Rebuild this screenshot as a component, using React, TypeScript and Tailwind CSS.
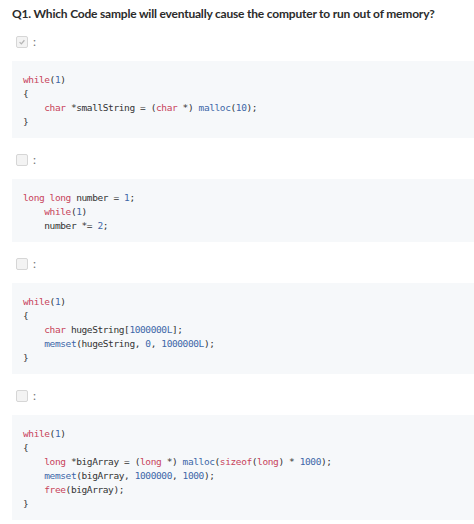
import React from "react";

type Tok = [string, string?];

const K = "text-[#c8435b]"; // keyword
const N = "text-[#3d67a8]"; // number / function

const samples: { checked: boolean; lines: Tok[][] }[] = [
  {
    checked: true,
    lines: [
      [["while", K], ["("], ["1", N], [")"]],
      [["{"]],
      [["    "], ["char", K], [" *smallString = ("], ["char", K], [" *) "], ["malloc", N], ["("], ["10", N], [");"]],
      [["}"]],
    ],
  },
  {
    checked: false,
    lines: [
      [["long", K], [" "], ["long", K], [" number = "], ["1", N], [";"]],
      [["    "], ["while", K], ["("], ["1", N], [")"]],
      [["    number *= "], ["2", N], [";"]],
    ],
  },
  {
    checked: false,
    lines: [
      [["while", K], ["("], ["1", N], [")"]],
      [["{"]],
      [["    "], ["char", K], [" hugeString["], ["1000000L", N], ["];"]],
      [["    "], ["memset", N], ["(hugeString, "], ["0", N], [", "], ["1000000L", N], [");"]],
      [["}"]],
    ],
  },
  {
    checked: false,
    lines: [
      [["while", K], ["("], ["1", N], [")"]],
      [["{"]],
      [
        ["    "], ["long", K], [" *bigArray = ("], ["long", K], [" *) "], ["malloc", N], ["("],
        ["sizeof", K], ["("], ["long", K], [") * "], ["1000", N], [");"],
      ],
      [["    "], ["memset", N], ["(bigArray, "], ["1000000", N], [", "], ["1000", N], [");"]],
      [["    "], ["free", K], ["(bigArray);"]],
      [["}"]],
    ],
  },
];

function Check({ checked }: { checked: boolean }) {
  return (
    <span className="inline-flex h-[12px] w-[12px] items-center justify-center rounded-[2px] border border-[#d6d6d6] bg-[#f3f3f3]">
      {checked && (
        <svg viewBox="0 0 10 10" className="h-[8px] w-[8px]">
          <path d="M2 5.2 L4.2 7.3 L8 2.8" fill="none" stroke="#b5b5b5" strokeWidth="1.6" />
        </svg>
      )}
    </span>
  );
}

export default function App() {
  return (
    <div className="min-h-screen bg-white pl-[12px] pt-[5px] text-[#333]" style={{ fontFamily: "Lato, sans-serif" }}>
      <h1 className="whitespace-nowrap text-[12px] font-bold leading-[18px] tracking-[-0.2px] text-[#2b2b2b]">
        Q1. Which Code sample will eventually cause the computer to run out of memory?
      </h1>

      {samples.map((s, i) => (
        <div key={i} className={i === 0 ? "mt-[12px]" : "mt-[15px]"}>
          <div className="flex items-center gap-[5px] pl-[4px] text-[12px] leading-[14px] text-[#777]">
            <Check checked={s.checked} />
            <span>:</span>
          </div>
          <pre
            className="mt-[12px] bg-[#f6f8fa] px-[11px] pb-[9px] pt-[12px] text-[9.5px] leading-[14px] tracking-[-0.4px] text-[#333]"
            style={{ fontFamily: "'DejaVu Sans Mono', monospace" }}
          >
            {s.lines.map((line, li) => (
              <div key={li}>
                {line.map(([t, c], ti) => (
                  <span key={ti} className={c}>
                    {t}
                  </span>
                ))}
              </div>
            ))}
          </pre>
        </div>
      ))}
    </div>
  );
}
